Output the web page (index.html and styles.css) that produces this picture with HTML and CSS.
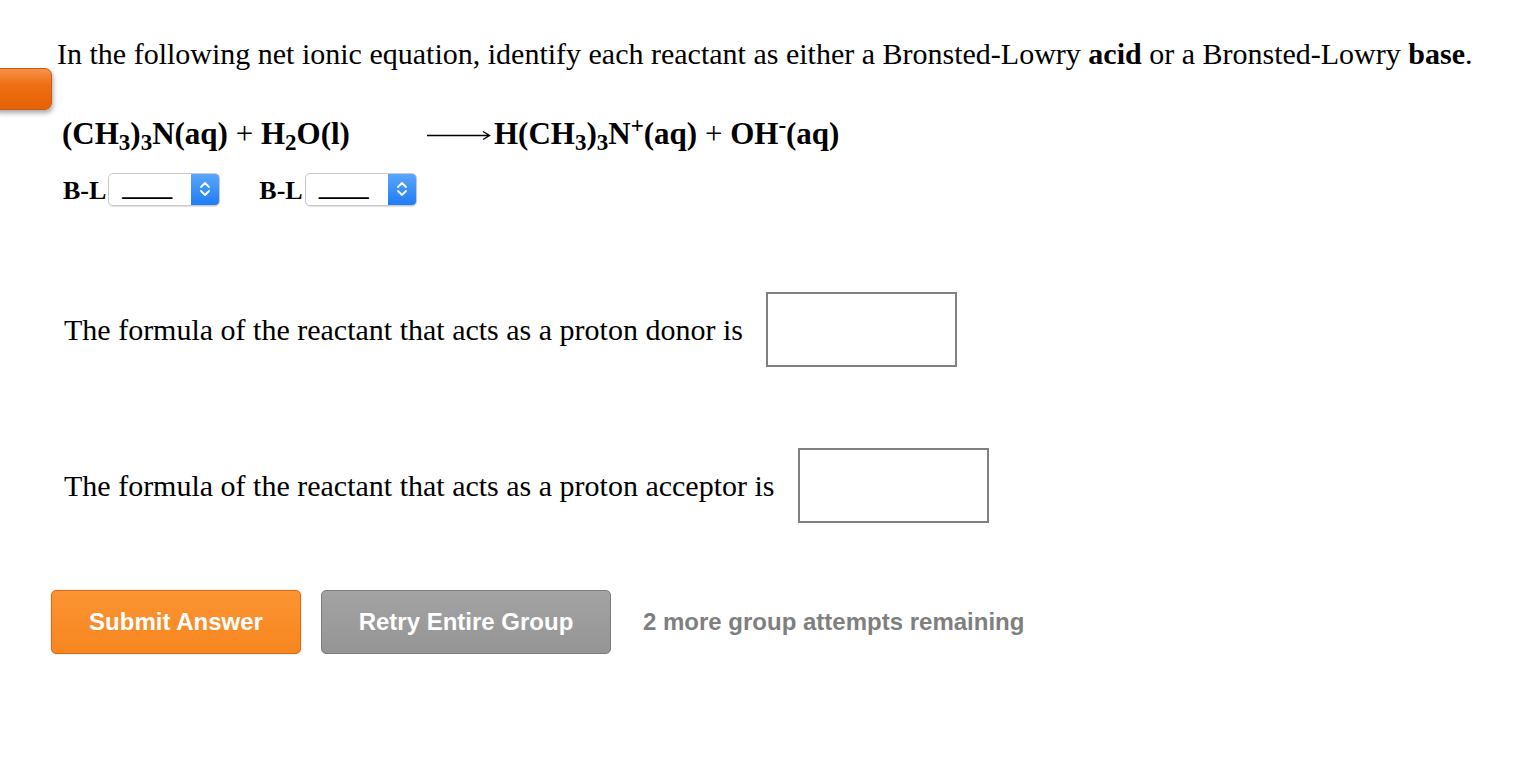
FILE: index.html
```html
<!DOCTYPE html>
<html>
<head>
<meta charset="utf-8">
<link rel="stylesheet" href="styles.css">
</head>
<body>
<div class="tab"></div>
<div class="page">
  <p class="prompt">In the following net ionic equation, identify each reactant as either a Bronsted-Lowry <b>acid</b> or a Bronsted-Lowry <b>base</b>.</p>
  <div class="equation">
    <div class="reactants">(CH<sub>3</sub>)<sub>3</sub>N(aq) <span class="op">+</span> H<sub>2</sub>O(l)</div>
    <svg class="arrow" width="64" height="12" viewBox="0 0 64 12"><path d="M0 6.5 H62 M56 2.5 L62.5 6.5 L56 10.5" fill="none" stroke="#000" stroke-width="1.4"/></svg>
    <div class="products">H(CH<sub>3</sub>)<sub>3</sub>N<sup>+</sup>(aq) <span class="op">+</span> OH<sup>-</sup>(aq)</div>
  </div>
  <div class="bl-row">
    <div class="bl"><span class="bl-label">B-L</span><span class="select"><span class="sel-text">____</span><span class="sel-btn"><svg width="12" height="20" viewBox="0 0 12 20"><path d="M2 8 L6 4 L10 8 M2 12 L6 16 L10 12" fill="none" stroke="#fff" stroke-width="1.8" stroke-linecap="round" stroke-linejoin="round"/></svg></span></span></div>
    <div class="bl"><span class="bl-label">B-L</span><span class="select"><span class="sel-text">____</span><span class="sel-btn"><svg width="12" height="20" viewBox="0 0 12 20"><path d="M2 8 L6 4 L10 8 M2 12 L6 16 L10 12" fill="none" stroke="#fff" stroke-width="1.8" stroke-linecap="round" stroke-linejoin="round"/></svg></span></span></div>
  </div>
  <div class="q q1"><span>The formula of the reactant that acts as a proton donor is</span><span class="box"></span></div>
  <div class="q q2"><span>The formula of the reactant that acts as a proton acceptor is</span><span class="box"></span></div>
  <div class="actions">
    <button class="btn submit">Submit Answer</button>
    <button class="btn retry">Retry Entire Group</button>
    <span class="remaining">2 more group attempts remaining</span>
  </div>
</div>
</body>
</html>
```
FILE: styles.css
```css
html, body { margin: 0; padding: 0; background: #fff; }
body { font-family: "Liberation Serif", "Times New Roman", serif; color: #000; width: 1522px; height: 760px; overflow: hidden; position: relative; }
.tab {
  position: absolute; left: -8px; top: 68px; width: 60px; height: 42px;
  border-radius: 7px;
  background: linear-gradient(#f7924a, #ee6f12 40%, #e56205);
  border: 1px solid #c95a12;
  box-sizing: border-box;
  box-shadow: 1px 3px 5px rgba(0,0,0,0.35);
}
.page { padding: 34px 0 0 57px; }
.prompt { margin: 0; font-size: 30px; line-height: 40px; }
.equation { display: flex; align-items: baseline; margin-top: 40px; font-weight: bold; font-size: 31px; padding-left: 5px; line-height: 40px; }
.reactants { width: 365px; }
.op { font-weight: normal; }
.equation sub { font-size: 23px; vertical-align: -6px; line-height: 0; }
.equation sup { font-size: 23px; vertical-align: 11px; line-height: 0; }
.arrow { align-self: center; margin-top: 2px; margin-right: 3px; }
.bl-row { display: flex; margin-top: 18px; padding-left: 6px; gap: 39px; }
.bl { display: flex; align-items: center; }
.bl-label { font-weight: bold; font-size: 26px; margin-right: 2px; margin-top: 4px; }
.select { display: flex; width: 112px; height: 33px; border: 1px solid #c8c8c8; border-radius: 5px; box-sizing: border-box; overflow: hidden; box-shadow: 0 1px 1px rgba(0,0,0,0.12); }
.sel-text { flex: 1; font-size: 25px; font-weight: bold; padding-left: 13px; line-height: 26px; }
.sel-btn { width: 28px; background: linear-gradient(#5aa6fb, #1f7cf4); display: flex; align-items: center; justify-content: center; }
.q { display: flex; align-items: center; font-size: 30px; padding-left: 7px; }
.q1 { margin-top: 86px; }
.q2 { margin-top: 81px; }
.box { display: block; width: 191px; height: 75px; border: 2px solid #808080; box-sizing: border-box; margin-left: 23px; }
.actions { display: flex; align-items: center; margin-top: 67px; margin-left: -6px; }
.btn { font-family: "Liberation Sans", Arial, sans-serif; font-weight: bold; font-size: 24px; color: #fff; height: 64px; border-radius: 5px; padding: 0; cursor: pointer; }
.submit { width: 250px; background: linear-gradient(#fb9433, #f7861f); border: 1px solid #e0661a; box-shadow: 0 0 2px rgba(0,0,0,0.2); }
.retry { width: 290px; margin-left: 20px; background: linear-gradient(#a3a3a3, #959595); border: 1px solid #7d7d7d; }
.remaining { font-family: "Liberation Sans", Arial, sans-serif; font-weight: bold; font-size: 24px; color: #7f7f7f; margin-left: 32px; }
```
